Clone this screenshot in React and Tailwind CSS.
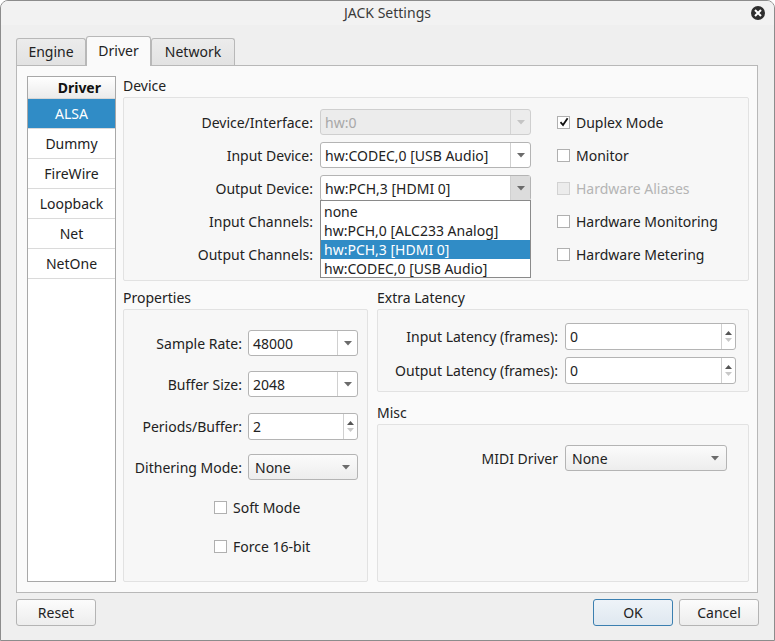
import React from "react";

const FONT = { fontFamily: "'Noto Sans', 'Open Sans', sans-serif" };

function Arrow({ disabled }) {
  return (
    <svg width="8" height="5" viewBox="0 0 8 5">
      <path d="M0 0 L8 0 L4 4.5 Z" fill={disabled ? "#c4c4c4" : "#6b6b6b"} />
    </svg>
  );
}

function Combo({ value, w, disabled, open }) {
  return (
    <div
      className={`flex h-[26px] rounded-[3px] border ${disabled ? "border-[#cfcfcf] bg-[#ececec] text-[#a8a8a8]" : "border-[#b4b4b4] bg-white text-[#222]"}`}
      style={{ width: w }}
    >
      <div className="flex-1 flex items-center pl-[4px] truncate">{value}</div>
      <div className={`w-[20px] flex items-center justify-center border-l ${disabled ? "border-[#d4d4d4]" : "border-[#d0d0d0]"} ${open ? "bg-[#dcdcdc]" : ""}`}>
        <Arrow disabled={disabled} />
      </div>
    </div>
  );
}

function ButtonCombo({ value, w }) {
  return (
    <div
      className="flex h-[26px] items-center rounded-[3px] border border-[#b4b4b4] bg-gradient-to-b from-[#fbfbfb] to-[#ededed] text-[#222]"
      style={{ width: w }}
    >
      <div className="flex-1 pl-[6px]">{value}</div>
      <div className="w-[22px] flex items-center justify-center">
        <Arrow />
      </div>
    </div>
  );
}

function Spin({ value, w }) {
  return (
    <div className="flex h-[27px] rounded-[3px] border border-[#b4b4b4] bg-white" style={{ width: w }}>
      <div className="flex-1 flex items-center pl-[4px] text-[#222]">{value}</div>
      <div className="w-[14px] flex flex-col items-center justify-center gap-[3px] border-l border-[#d0d0d0]">
        <svg width="7" height="4" viewBox="0 0 7 4"><path d="M0 4 L7 4 L3.5 0 Z" fill="#555" /></svg>
        <svg width="7" height="4" viewBox="0 0 7 4"><path d="M0 0 L7 0 L3.5 4 Z" fill="#c8c8c8" /></svg>
      </div>
    </div>
  );
}

function Check({ label, checked, disabled }) {
  return (
    <div className={`flex items-center gap-[6px] h-[26px] ${disabled ? "text-[#b4b4b4]" : "text-[#222]"}`}>
      <div className={`w-[13px] h-[13px] border flex items-center justify-center ${disabled ? "border-[#d2d2d2] bg-[#ececec]" : "border-[#b0b0b0] bg-white"}`}>
        {checked && (
          <svg width="10" height="10" viewBox="0 0 10 10">
            <path d="M1.5 5.2 L4 8 L8.6 1.2" fill="none" stroke="#111" strokeWidth="1.8" />
          </svg>
        )}
      </div>
      <span>{label}</span>
    </div>
  );
}

function Group({ title, className, children }) {
  return (
    <div className={className}>
      <div className="h-[20px] leading-[20px] text-[#222]">{title}</div>
      <div className="mt-[1px] flex-1 rounded-[2px] border border-[#e2e2e2] bg-[#f7f7f7]">{children}</div>
    </div>
  );
}

const drivers = ["ALSA", "Dummy", "FireWire", "Loopback", "Net", "NetOne"];

export default function App() {
  return (
    <div className="w-[775px] h-[641px] bg-white" style={FONT}>
      <div className="w-[775px] h-[641px] flex flex-col rounded-t-[8px] border border-[#8c8c8c] bg-[#efefef] text-[14px] overflow-hidden">
        {/* title bar */}
        <div className="relative h-[24px] flex items-center justify-center bg-[#f2f2f2] text-[#3a3a3a] pb-[1px]">
          JACK Settings
          <div className="absolute right-[9px] top-[5px] w-[14px] h-[14px] rounded-full bg-[#2e2e2e] flex items-center justify-center">
            <svg width="8" height="8" viewBox="0 0 8 8">
              <path d="M1 1 L7 7 M7 1 L1 7" stroke="white" strokeWidth="2" />
            </svg>
          </div>
        </div>

        <div className="flex-1 flex flex-col px-[15px]">
          {/* tabs */}
          <div className="mt-[11px] flex items-end h-[29px] text-[#222]">
            <div className="h-[27px] w-[70px] flex items-center justify-center border border-b-0 border-[#b8b8b8] rounded-t-[3px] bg-gradient-to-b from-[#ececec] to-[#e2e2e2] pb-[1px]">Engine</div>
            <div className="relative z-10 -mb-[1px] h-[30px] w-[65px] flex items-center justify-center border border-b-0 border-[#b8b8b8] rounded-t-[3px] bg-[#fafafa] pb-[2px]">Driver</div>
            <div className="h-[27px] w-[84px] flex items-center justify-center border border-b-0 border-[#b8b8b8] rounded-t-[3px] bg-gradient-to-b from-[#ececec] to-[#e2e2e2] pb-[1px]">Network</div>
          </div>

          {/* pane */}
          <div className="h-[528px] w-[742px] border border-[#b8b8b8] bg-[#fafafa] flex pl-[10px] pr-[8px] pt-[10px] pb-[10px] gap-[7px]">
            {/* driver list */}
            <div className="w-[89px] border border-[#a8a8a8] bg-white flex flex-col">
              <div className="h-[22px] flex items-center justify-end pr-[14px] font-bold text-[#111] border-b border-[#d6d6d6] bg-gradient-to-b from-white to-[#ebebeb]">Driver</div>
              {drivers.map((d, i) => (
                <div
                  key={d}
                  className={`h-[30px] flex items-center justify-center border-b border-[#dadada] ${i === 0 ? "bg-[#308cc6] text-white" : "text-[#222]"}`}
                >
                  {d}
                </div>
              ))}
            </div>

            {/* right side */}
            <div className="flex-1 flex flex-col">
              <Group title="Device" className="flex flex-col h-[205px]">
                <div className="relative flex pt-[11px]">
                  <div className="w-[190px] flex flex-col gap-[7px] items-end pr-[1px] text-[#222]">
                    {["Device/Interface:", "Input Device:", "Output Device:", "Input Channels:", "Output Channels:"].map((l) => (
                      <div key={l} className="h-[26px] flex items-center">{l}</div>
                    ))}
                  </div>
                  <div className="ml-[6px] flex flex-col gap-[7px]">
                    <Combo value="hw:0" w={211} disabled />
                    <Combo value="hw:CODEC,0 [USB Audio]" w={211} />
                    <Combo value="hw:PCH,3 [HDMI 0]" w={211} open />
                  </div>
                  <div className="ml-[26px] flex flex-col gap-[7px]">
                    <Check label="Duplex Mode" checked />
                    <Check label="Monitor" />
                    <Check label="Hardware Aliases" disabled />
                    <Check label="Hardware Monitoring" />
                    <Check label="Hardware Metering" />
                  </div>
                  {/* open popup */}
                  <div className="absolute left-[196px] top-[102px] w-[211px] h-[78px] border border-[#8a8a8a] bg-white text-[#222] flex flex-col pt-[1px]">
                    <div className="h-[19px] flex items-center pl-[3px]">none</div>
                    <div className="h-[19px] flex items-center pl-[3px]">hw:PCH,0 [ALC233 Analog]</div>
                    <div className="h-[19px] flex items-center pl-[3px] bg-[#308cc6] text-white">hw:PCH,3 [HDMI 0]</div>
                    <div className="h-[19px] flex items-center pl-[3px]">hw:CODEC,0 [USB Audio]</div>
                  </div>
                </div>
              </Group>

              <div className="mt-[7px] flex gap-[9px] flex-1">
                <Group title="Properties" className="w-[245px] flex flex-col">
                  <div className="pt-[20px] flex flex-col text-[#222]">
                    <div className="flex items-center h-[26px]">
                      <div className="w-[118px] text-right">Sample Rate:</div>
                      <div className="ml-[6px]"><Combo value="48000" w={110} /></div>
                    </div>
                    <div className="flex items-center h-[26px] mt-[15px]">
                      <div className="w-[118px] text-right">Buffer Size:</div>
                      <div className="ml-[6px]"><Combo value="2048" w={110} /></div>
                    </div>
                    <div className="flex items-center h-[27px] mt-[16px]">
                      <div className="w-[118px] text-right">Periods/Buffer:</div>
                      <div className="ml-[6px]"><Spin value="2" w={110} /></div>
                    </div>
                    <div className="flex items-center h-[26px] mt-[14px]">
                      <div className="w-[118px] text-right">Dithering Mode:</div>
                      <div className="ml-[6px]"><ButtonCombo value="None" w={110} /></div>
                    </div>
                    <div className="pl-[90px] mt-[14px]"><Check label="Soft Mode" /></div>
                    <div className="pl-[90px] mt-[13px]"><Check label="Force 16-bit" /></div>
                  </div>
                </Group>

                <div className="flex-1 flex flex-col">
                  <Group title="Extra Latency" className="flex flex-col h-[104px]">
                    <div className="pt-[13px] flex flex-col gap-[7px] text-[#222]">
                      <div className="flex items-center">
                        <div className="w-[180px] text-right">Input Latency (frames):</div>
                        <div className="ml-[7px]"><Spin value="0" w={171} /></div>
                      </div>
                      <div className="flex items-center">
                        <div className="w-[180px] text-right">Output Latency (frames):</div>
                        <div className="ml-[7px]"><Spin value="0" w={171} /></div>
                      </div>
                    </div>
                  </Group>
                  <Group title="Misc" className="mt-[11px] flex flex-col flex-1">
                    <div className="pt-[20px] flex items-center text-[#222]">
                      <div className="w-[180px] text-right">MIDI Driver</div>
                      <div className="ml-[7px]"><ButtonCombo value="None" w={162} /></div>
                    </div>
                  </Group>
                </div>
              </div>
            </div>
          </div>

          {/* buttons */}
          <div className="mt-[6px] flex items-center text-[#222]">
            <div className="w-[80px] h-[27px] flex items-center justify-center rounded-[3px] border border-[#b4b4b4] bg-gradient-to-b from-[#fcfcfc] to-[#ededed] pb-[1px]">Reset</div>
            <div className="flex-1" />
            <div className="w-[80px] h-[27px] flex items-center justify-center rounded-[3px] border border-[#3b7fb0] bg-gradient-to-b from-[#eef3f8] to-[#dfe8f0] pb-[1px]">OK</div>
            <div className="ml-[6px] w-[80px] h-[27px] flex items-center justify-center rounded-[3px] border border-[#b4b4b4] bg-gradient-to-b from-[#fcfcfc] to-[#ededed] pb-[1px]">Cancel</div>
          </div>
        </div>
      </div>
    </div>
  );
}
